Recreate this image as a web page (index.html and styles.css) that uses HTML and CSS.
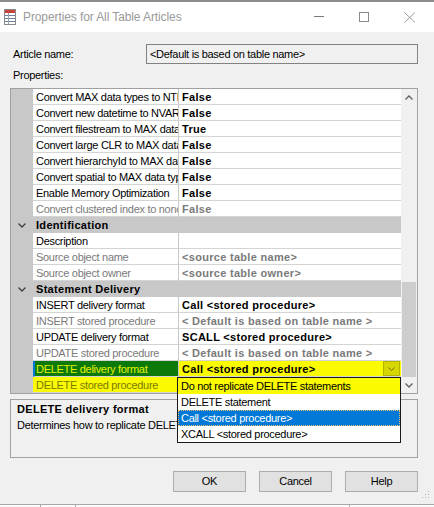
FILE: index.html
```html
<!DOCTYPE html>
<html>
<head>
<meta charset="utf-8">
<title>Properties for All Table Articles</title>
<link rel="stylesheet" href="styles.css">
</head>
<body>
<div class="topline"></div>
<div class="titlebar">
  <svg class="app-icon" width="12" height="16" viewBox="0 0 12 16">
    <rect x="0.5" y="0.5" width="11" height="15" fill="#fff" stroke="#8a8a8a"/>
    <rect x="1" y="1" width="10" height="3" fill="#c9413b"/>
    <line x1="1" y1="6.5" x2="11" y2="6.5" stroke="#6f7f9a"/>
    <line x1="1" y1="9.5" x2="11" y2="9.5" stroke="#6f7f9a"/>
    <line x1="1" y1="12.5" x2="11" y2="12.5" stroke="#6f7f9a"/>
    <line x1="4.5" y1="4" x2="4.5" y2="15" stroke="#9aa3b3"/>
  </svg>
  <span class="title">Properties for All Table Articles</span>
  <div class="caption">
    <div class="cap-btn"><svg width="11" height="11" viewBox="0 0 11 11"><line x1="0" y1="4.5" x2="10" y2="4.5" stroke="#7a7a7a"/></svg></div>
    <div class="cap-btn"><svg width="11" height="11" viewBox="0 0 11 11"><rect x="0.5" y="0.5" width="9" height="9" fill="none" stroke="#8a8a8a"/></svg></div>
    <div class="cap-btn"><svg width="12" height="11" viewBox="0 0 12 11"><path d="M0.5 0.5 L11 10.5 M11 0.5 L0.5 10.5" stroke="#9a9a9a" fill="none"/></svg></div>
  </div>
</div>

<div class="dialog">
  <div class="field">
    <div class="field-label">Article name:</div>
    <div class="textbox">&lt;Default is based on table name&gt;</div>
  </div>
  <div class="props-label">Properties:</div>

  <div class="grid">
    <div class="rows">
      <div class="row"><div class="m"></div><div class="n">Convert MAX data types to NTEXT and IMAGE</div><div class="v">False</div></div>
      <div class="row"><div class="m"></div><div class="n">Convert new datetime to NVARCHAR</div><div class="v">False</div></div>
      <div class="row"><div class="m"></div><div class="n">Convert filestream to MAX data types</div><div class="v">True</div></div>
      <div class="row"><div class="m"></div><div class="n">Convert large CLR to MAX data types</div><div class="v">False</div></div>
      <div class="row"><div class="m"></div><div class="n">Convert hierarchyId to MAX data types</div><div class="v">False</div></div>
      <div class="row"><div class="m"></div><div class="n">Convert spatial to MAX data types</div><div class="v">False</div></div>
      <div class="row"><div class="m"></div><div class="n">Enable Memory Optimization</div><div class="v">False</div></div>
      <div class="row ro"><div class="m"></div><div class="n">Convert clustered index to nonclustered for memory optimized article</div><div class="v">False</div></div>

      <div class="row cat"><div class="m"><svg width="8" height="5" viewBox="0 0 8 5"><path d="M0.5 0.5 L4 4 L7.5 0.5" fill="none" stroke="#3c3c3c" stroke-width="1.3"/></svg></div><div class="cat-label">Identification</div></div>
      <div class="row"><div class="m"></div><div class="n">Description</div><div class="v"></div></div>
      <div class="row ro"><div class="m"></div><div class="n">Source object name</div><div class="v">&lt;source table name&gt;</div></div>
      <div class="row ro"><div class="m"></div><div class="n">Source object owner</div><div class="v">&lt;source table owner&gt;</div></div>

      <div class="row cat"><div class="m"><svg width="8" height="5" viewBox="0 0 8 5"><path d="M0.5 0.5 L4 4 L7.5 0.5" fill="none" stroke="#3c3c3c" stroke-width="1.3"/></svg></div><div class="cat-label">Statement Delivery</div></div>
      <div class="row"><div class="m"></div><div class="n">INSERT delivery format</div><div class="v">Call &lt;stored procedure&gt;</div></div>
      <div class="row ro"><div class="m"></div><div class="n">INSERT stored procedure</div><div class="v">&lt; Default is based on table name &gt;</div></div>
      <div class="row"><div class="m"></div><div class="n">UPDATE delivery format</div><div class="v">SCALL &lt;stored procedure&gt;</div></div>
      <div class="row ro"><div class="m"></div><div class="n">UPDATE stored procedure</div><div class="v">&lt; Default is based on table name &gt;</div></div>
      <div class="row sel"><div class="m"></div><div class="n">DELETE delivery format</div><div class="v"><span>Call &lt;stored procedure&gt;</span><span class="dd-btn"><svg width="7" height="4" viewBox="0 0 7 4"><path d="M0.5 0.5 L3.5 3.5 L6.5 0.5" fill="none" stroke="#6d6d00"/></svg></span></div></div>
      <div class="row hl"><div class="m"></div><div class="n">DELETE stored procedure</div><div class="v">&lt; Default is based on table name &gt;</div></div>
    </div>
    <div class="scrollbar">
      <div class="sb-btn"><svg width="8" height="5" viewBox="0 0 8 5"><path d="M0.5 4.5 L4 1 L7.5 4.5" fill="none" stroke="#606060" stroke-width="1.3"/></svg></div>
      <div class="sb-track"><div class="sb-thumb"></div></div>
      <div class="sb-btn"><svg width="8" height="5" viewBox="0 0 8 5"><path d="M0.5 0.5 L4 4 L7.5 0.5" fill="none" stroke="#606060" stroke-width="1.3"/></svg></div>
    </div>
  </div>

  <div class="desc">
    <div class="desc-title">DELETE delivery format</div>
    <div class="desc-text">Determines how to replicate DELETE statements.</div>
  </div>

  <div class="buttons">
    <div class="btn">OK</div>
    <div class="btn">Cancel</div>
    <div class="btn">Help</div>
  </div>

  <div class="dropdown">
    <div class="dd-item dd-hl">Do not replicate DELETE statements</div>
    <div class="dd-item">DELETE statement</div>
    <div class="dd-item dd-sel">Call &lt;stored procedure&gt;</div>
    <div class="dd-item">XCALL &lt;stored procedure&gt;</div>
  </div>

  <svg class="grip" width="8" height="8" viewBox="0 0 8 8">
    <rect x="6" y="0" width="1" height="1" fill="#b5b5b5"/>
    <rect x="3" y="3" width="1" height="1" fill="#b5b5b5"/>
    <rect x="6" y="3" width="1" height="1" fill="#b5b5b5"/>
    <rect x="0" y="6" width="1" height="1" fill="#b5b5b5"/>
    <rect x="3" y="6" width="1" height="1" fill="#b5b5b5"/>
    <rect x="6" y="6" width="1" height="1" fill="#b5b5b5"/>
  </svg>
</div>
<div class="frame-bottom"></div>
</body>
</html>
```

FILE: styles.css
```css
* { box-sizing: border-box; }
html, body { margin: 0; padding: 0; }
body {
  width: 434px;
  height: 507px;
  overflow: hidden;
  background: #f0f0f0;
  font-family: "Liberation Sans", Arial, sans-serif;
  font-size: 11px;
  letter-spacing: -0.3px;
  color: #000;
}

.topline { height: 2px; background: #8c8c8c; }

.titlebar {
  height: 30px;
  background: #fff;
  display: flex;
  align-items: center;
}
.app-icon { margin-left: 4px; margin-right: 7px; flex: none; }
.title {
  flex: 1;
  font-size: 12px;
  letter-spacing: -0.1px;
  color: #9a9a9a;
}
.caption { display: flex; height: 30px; padding-right: 2px; }
.cap-btn {
  width: 45px;
  display: flex;
  align-items: center;
  justify-content: center;
}

.dialog {
  position: relative;
  padding: 12px 16px 12px 10px;
}

.field { display: flex; height: 20px; }
.field-label { width: 136px; padding-left: 3px; line-height: 20px; }
.textbox {
  flex: 1;
  border: 1px solid #828282;
  line-height: 18px;
  padding-left: 3px;
  white-space: nowrap;
}
.props-label { margin: 3px 0 5px 3px; line-height: 16px; }

.grid {
  display: flex;
  height: 306px;
  border: 1px solid #a0a0a0;
  background: #fff;
}
.rows { width: 390px; }
.row { display: flex; height: 16px; }
.m { width: 22px; flex: none; background: #c8c8c8; }
.n {
  width: 146px;
  flex: none;
  height: 16px;
  padding-left: 3px;
  border-right: 1px solid #c8c8c8;
  border-bottom: 1px solid #d4d4d4;
  line-height: 17px;
  white-space: nowrap;
  overflow: hidden;
}
.v {
  flex: 1;
  height: 16px;
  padding-left: 3px;
  border-bottom: 1px solid #d4d4d4;
  line-height: 17px;
  font-weight: bold;
  letter-spacing: 0.3px;
  white-space: nowrap;
  overflow: hidden;
}
.ro .n, .ro .v { color: #7a7a7a; }

.cat { background: #c8c8c8; }
.cat .m { display: flex; align-items: center; justify-content: center; padding-top: 1px; }
.cat-label {
  padding-left: 3px;
  line-height: 17px;
  font-weight: bold;
  letter-spacing: 0.3px;
}

.sel .n {
  background: #0b7a0b;
  border-left: 2px solid #0078d7;
  padding-left: 1px;
  color: #e4f200;
}
.sel .v {
  background: #fafa00;
  display: flex;
  justify-content: space-between;
  padding-right: 1px;
}
.dd-btn {
  width: 17px;
  height: 15px;
  background: #d6d600;
  border: 1px solid #b4b400;
  display: flex;
  align-items: center;
  justify-content: center;
  padding-top: 1px;
}
.hl .n { background: #fafa00; color: #7a7a00; }
.hl .v { background: #fafa00; color: #7a7a00; }

.scrollbar {
  width: 16px;
  display: flex;
  flex-direction: column;
  background: #f0f0f0;
}
.sb-btn {
  height: 16px;
  display: flex;
  align-items: center;
  justify-content: center;
}
.sb-track {
  flex: 1;
  display: flex;
  flex-direction: column;
  justify-content: flex-end;
}
.sb-thumb { height: 95px; margin: 0 1px; background: #cdcdcd; }

.desc {
  margin-top: 5px;
  height: 59px;
  border: 1px solid #a0a0a0;
  padding: 1px 6px 0;
  line-height: 16px;
  white-space: nowrap;
  overflow: hidden;
}
.desc-title { font-weight: bold; letter-spacing: 0.3px; }

.buttons {
  display: flex;
  justify-content: flex-end;
  gap: 13px;
  margin-top: 13px;
}
.btn {
  width: 73px;
  height: 21px;
  background: #e1e1e1;
  border: 1px solid #adadad;
  line-height: 19px;
  text-align: center;
}

.dropdown {
  position: absolute;
  left: 177px;
  top: 345px;
  width: 224px;
  border: 1px solid #1a1a1a;
  background: #fff;
  z-index: 2;
}
.dd-item {
  height: 16px;
  line-height: 16px;
  padding-left: 3px;
  white-space: nowrap;
}
.dd-hl { background: #fafa00; }
.dd-sel {
  background: #0078d7;
  color: #fff;
  outline: 1px dotted #e8c070;
  outline-offset: -1px;
}

.grip { position: absolute; right: 4px; bottom: 5px; }

.frame-bottom {
  height: 3px;
  border-top: 1px solid #a8a8a8;
  background:
    linear-gradient(#a8a8a8, #a8a8a8) 40px 0 / 1px 100% no-repeat,
    linear-gradient(#a8a8a8, #a8a8a8) 75px 0 / 1px 100% no-repeat,
    linear-gradient(#a8a8a8, #a8a8a8) 349px 0 / 1px 100% no-repeat,
    #fbfbfb;
}
```
